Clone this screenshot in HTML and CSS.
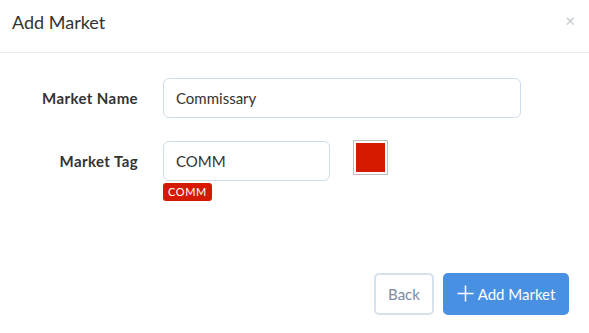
FILE: index.html
```html
<!DOCTYPE html>
<html lang="en">
<head>
    <meta charset="UTF-8">
    <title>Add Market</title>
    <link rel="stylesheet" href="styles.css">
</head>
<body>
    <div class="modal">
        <div class="modal-header">
            <h4 class="modal-title">Add Market</h4>
            <span class="close">&times;</span>
        </div>
        <div class="modal-body">
            <div class="form-row">
                <label class="form-label">Market Name</label>
                <input class="form-input wide" type="text" value="Commissary">
            </div>
            <div class="form-row">
                <label class="form-label">Market Tag</label>
                <div class="tag-field">
                    <input class="form-input short" type="text" value="COMM">
                    <span class="tag-badge">COMM</span>
                </div>
                <div class="swatch"><div class="swatch-color"></div></div>
            </div>
        </div>
        <div class="modal-footer">
            <button class="btn btn-back">Back</button>
            <button class="btn btn-primary">
                <svg class="plus" width="17" height="17" viewBox="0 0 17 17">
                    <path d="M8.5 0.5v16M0.5 8.5h16" stroke="#ffffff" stroke-width="1.5" fill="none"/>
                </svg>
                Add Market
            </button>
        </div>
    </div>
</body>
</html>
```

FILE: styles.css
```css
body {
    margin: 0;
    font-family: 'Lato', 'Open Sans', sans-serif;
    background-color: #ffffff;
    color: #333333;
}
.modal {
    width: 589px;
    height: 333px;
    display: flex;
    flex-direction: column;
}
.modal-header {
    display: flex;
    align-items: center;
    justify-content: space-between;
    height: 52px;
    padding: 0 12px;
    border-bottom: 1px solid #e9eef4;
}
.modal-title {
    margin: 0;
    margin-top: -8px;
    font-size: 18px;
    font-weight: 400;
    color: #333333;
}
.close {
    font-size: 17px;
    color: #c4c9cf;
    margin-top: -12px;
    margin-right: 2px;
}
.modal-body {
    padding-top: 25px;
    display: flex;
    flex-direction: column;
    gap: 23px;
}
.form-row {
    display: flex;
    align-items: flex-start;
}
.form-label {
    width: 138px;
    padding-right: 25px;
    text-align: right;
    font-size: 15px;
    font-weight: 700;
    letter-spacing: 0.4px;
    color: #333333;
    line-height: 40px;
}
.form-input {
    box-sizing: border-box;
    height: 40px;
    border: 1px solid #cfdcec;
    border-radius: 6px;
    padding: 0 12px;
    font-family: inherit;
    font-size: 15px;
    color: #333333;
    outline: none;
}
.wide {
    width: 358px;
}
.short {
    width: 167px;
}
.tag-field {
    display: flex;
    flex-direction: column;
    align-items: flex-start;
    gap: 2px;
}
.tag-badge {
    background-color: #d41a00;
    color: #ffffff;
    font-size: 11px;
    line-height: 18px;
    padding: 0 5px;
    border-radius: 3px;
    letter-spacing: 0.6px;
}
.swatch {
    margin-left: 23px;
    margin-top: -1px;
    width: 29px;
    height: 29px;
    padding: 2px;
    border: 1px solid #bdbdbd;
    background: #ffffff;
}
.swatch-color {
    width: 100%;
    height: 100%;
    background-color: #d61a00;
}
.modal-footer {
    margin-top: auto;
    display: flex;
    justify-content: flex-end;
    gap: 9px;
    padding: 0 20px 18px 0;
}
.btn {
    height: 42px;
    border-radius: 5px;
    font-family: inherit;
    font-size: 15px;
    cursor: pointer;
}
.btn-back {
    width: 60px;
    background: #ffffff;
    border: 2px solid #d6e1ee;
    color: #7b8ba3;
}
.btn-primary {
    width: 126px;
    background-color: #4a90e2;
    border: none;
    color: #ffffff;
    display: flex;
    align-items: center;
    justify-content: center;
    gap: 4px;
    padding: 0;
}
.plus {
    margin-top: -2px;
}
```
